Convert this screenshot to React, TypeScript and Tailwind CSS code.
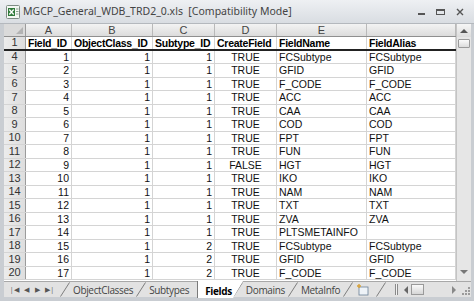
import { ReactNode } from 'react'

type Row = {
  n: number
  id: string
  oc: string
  st: string
  cf: string
  name: string
  alias: string
}

const names = [
  'FCSubtype', 'GFID', 'F_CODE', 'ACC', 'CAA', 'COD', 'FPT', 'FUN', 'HGT',
  'IKO', 'NAM', 'TXT', 'ZVA', 'PLTSMETAINFO', 'FCSubtype', 'GFID', 'F_CODE',
]

const rows: Row[] = names.map((name, i) => ({
  n: i + 4,
  id: String(i + 1),
  oc: '1',
  st: i >= 14 ? '2' : '1',
  cf: name === 'HGT' ? 'FALSE' : 'TRUE',
  name,
  alias: name === 'PLTSMETAINFO' ? '' : name,
}))

// column widths in px: A..F
const cols = ['w-[46px]', 'w-[81px]', 'w-[62px]', 'w-[62px]', 'w-[90px]', 'w-[89px]']

function Cell({
  w,
  align = 'left',
  bold,
  children,
}: {
  w: string
  align?: 'left' | 'right' | 'center'
  bold?: boolean
  children?: ReactNode
}) {
  const a = align === 'right' ? 'justify-end pr-[2px]' : align === 'center' ? 'justify-center' : 'justify-start pl-[2px]'
  return (
    <div
      className={`${w} shrink-0 h-full flex items-center overflow-hidden whitespace-nowrap border-r border-[#d4d4d4] ${a} ${bold ? 'font-bold text-black tracking-[-0.25px]' : 'text-[#111]'}`}
    >
      {children}
    </div>
  )
}

function RowHead({ children }: { children: ReactNode }) {
  return (
    <div className="w-[22px] shrink-0 h-full flex items-center justify-center bg-gradient-to-r from-[#ececec] to-[#dedede] border-r border-[#9b9b9b] text-[#333] text-[11px]">
      {children}
    </div>
  )
}

function ColHead({ w, label }: { w: string; label: string }) {
  return (
    <div
      className={`${w} shrink-0 h-full flex items-center justify-center border-r border-[#b9b9b9] text-[#444] text-[11px]`}
    >
      {label}
    </div>
  )
}

function Slant() {
  return (
    <svg className="absolute left-0 top-0 h-full w-[10px]" viewBox="0 0 10 16" preserveAspectRatio="none">
      <line x1="0.5" y1="15.5" x2="9.5" y2="0.5" stroke="#7a7a7a" strokeWidth="1" />
    </svg>
  )
}

function Tab({ label, active }: { label: string; active?: boolean }) {
  if (active) {
    return (
      <div className="relative flex items-end h-[17px] -mt-px ml-[5px] pl-[7px] pr-[1px] bg-white font-bold text-black border-l border-[#7a7a7a] z-10">
        <span className="pb-[2px]">{label}</span>
        <svg className="absolute right-[-10px] top-0 h-full w-[10px]" viewBox="0 0 10 17" preserveAspectRatio="none">
          <path d="M0 0 L10 0 L0 17 Z" fill="#ffffff" />
        </svg>
      </div>
    )
  }
  return (
    <div className="relative flex items-end h-full pl-[13px] pr-[3px] text-[#444]">
      <Slant />
      <span className="pb-[2px]">{label}</span>
    </div>
  )
}

export default function App() {
  return (
    <div className="w-[474px] h-[301px] overflow-hidden bg-[#c9cdd2] flex flex-col text-[10.5px] leading-none font-['Liberation_Sans',Arial,sans-serif]">
      {/* title bar */}
      <div className="h-[24px] shrink-0 flex items-center bg-gradient-to-b from-[#eef0f3] to-[#d9dde2] border-b border-[#b4b8bd]">
        <svg className="ml-[6px] w-[14px] h-[14px]" viewBox="0 0 14 14">
          <rect x="0.5" y="0.5" width="13" height="13" rx="1" fill="#f4f7f3" stroke="#7f8c85" />
          <rect x="2" y="3" width="7" height="8" fill="#2f7a3a" />
          <path d="M3.3 4.5 L7.7 9.5 M7.7 4.5 L3.3 9.5" stroke="#fff" strokeWidth="1.3" />
          <path d="M10 4h2.5M10 6.5h2.5M10 9h2.5" stroke="#6b8a6f" strokeWidth="0.8" />
        </svg>
        <span className="ml-[3px] text-[10.5px] text-[#444] font-['Noto_Sans',sans-serif]">
          MGCP_General_WDB_TRD2_0.xls&nbsp;&nbsp;[Compatibility Mode]
        </span>
        <div className="ml-auto flex items-center gap-[11px] pr-[10px] text-[#4a4a4a]">
          <div className="w-[7px] h-[2px] bg-[#555] mt-[5px]" />
          <div className="w-[9px] h-[6px] border border-[#555] border-t-2" />
          <svg className="w-[8px] h-[8px]" viewBox="0 0 8 8">
            <path d="M1 1 L7 7 M7 1 L1 7" stroke="#555" strokeWidth="1.4" />
          </svg>
        </div>
      </div>

      {/* sheet + vertical scrollbar */}
      <div className="flex-1 min-h-0 flex pl-[4px] pr-[3px]">
        <div className="flex flex-col bg-white">
          {/* column header */}
          <div className="h-[13px] shrink-0 flex bg-gradient-to-b from-[#f3f3f3] to-[#dcdcdc] border-b border-[#8f8f8f]">
            <div className="relative w-[22px] shrink-0 h-full border-r border-[#9b9b9b] bg-[#dadada]">
              <div className="absolute right-[2px] bottom-[2px] w-0 h-0 border-l-[7px] border-l-transparent border-b-[7px] border-b-[#b3b3b3]" />
            </div>
            {['A', 'B', 'C', 'D', 'E', ''].map((l, i) => (
              <ColHead key={i} w={cols[i]} label={l} />
            ))}
          </div>
          {/* row 1 (frozen header) */}
          <div className="h-[13.56px] shrink-0 flex border-b-2 border-[#222]">
            <RowHead>1</RowHead>
            <Cell w={cols[0]} bold>Field_ID</Cell>
            <Cell w={cols[1]} bold>ObjectClass_ID</Cell>
            <Cell w={cols[2]} bold>Subtype_ID</Cell>
            <Cell w={cols[3]} bold>CreateField</Cell>
            <Cell w={cols[4]} bold>FieldName</Cell>
            <Cell w={cols[5]} bold>FieldAlias</Cell>
          </div>
          {rows.map((r) => (
            <div key={r.n} className="h-[13.5px] shrink-0 flex border-b border-[#d4d4d4]">
              <RowHead>{r.n}</RowHead>
              <Cell w={cols[0]} align="right">{r.id}</Cell>
              <Cell w={cols[1]} align="right">{r.oc}</Cell>
              <Cell w={cols[2]} align="right">{r.st}</Cell>
              <Cell w={cols[3]} align="center">{r.cf}</Cell>
              <Cell w={cols[4]}>{r.name}</Cell>
              <Cell w={cols[5]}>{r.alias}</Cell>
            </div>
          ))}
        </div>

        {/* vertical scrollbar */}
        <div className="w-[15px] shrink-0 flex flex-col bg-[#e6e6e6] border-l border-[#c4c4c4]">
          <div className="h-[13px] flex items-center justify-center bg-gradient-to-b from-[#f6f6f6] to-[#dcdcdc]">
            <div className="w-0 h-0 border-x-[4px] border-x-transparent border-b-[4px] border-b-[#555]" />
          </div>
          <div className="mt-[2px] mx-[1px] h-[9px] bg-gradient-to-b from-[#fafafa] to-[#dcdcdc] border border-[#9a9a9a] rounded-[1px]" />
          <div className="flex-1" />
          <div className="h-[13px] flex items-center justify-center">
            <div className="w-0 h-0 border-x-[4px] border-x-transparent border-t-[4px] border-t-[#777]" />
          </div>
          <div className="h-[3px]" />
        </div>
      </div>

      {/* sheet tabs */}
      <div className="h-[16px] shrink-0 mx-[4px] mr-[3px] flex items-stretch bg-[#e2e2e2] border-t border-[#a8a8a8] text-[10px] font-['Open_Sans',sans-serif] tracking-[-0.35px]">
        <div className="w-[56px] shrink-0 flex items-center justify-around px-[3px] text-[7px] text-[#555] tracking-normal">
          <span>|◀</span>
          <span>◀</span>
          <span>▶</span>
          <span>▶|</span>
        </div>
        <div className="flex items-stretch">
          <Tab label="ObjectClasses" />
          <Tab label="Subtypes" />
          <Tab label="Fields" active />
          <Tab label="Domains" />
          <Tab label="MetaInfo" />
          <div className="relative flex items-center pl-[13px] pr-[6px]">
            <Slant />
            <svg className="w-[14px] h-[12px]" viewBox="0 0 14 12">
              <rect x="3" y="3" width="9" height="8" fill="#eef3f8" stroke="#6a7f96" strokeWidth="0.8" />
              <path d="M1 2h4M3 0v4" stroke="#d8a23a" strokeWidth="1.4" />
            </svg>
          </div>
          <div className="relative w-[10px]">
            <Slant />
          </div>
        </div>
        <div className="ml-auto w-[76px] flex items-center">
          <div className="w-[3px] h-[11px] border-x border-[#8a8a8a] bg-[#f2f2f2]" />
          <div className="w-[10px] flex justify-center ml-[3px]">
            <div className="w-0 h-0 border-y-[4px] border-y-transparent border-r-[4px] border-r-[#666]" />
          </div>
          <div className="w-[13px] h-[11px] bg-gradient-to-b from-[#fafafa] to-[#d6d6d6] border border-[#9a9a9a]" />
          <div className="flex-1" />
          <div className="w-[10px] flex justify-center">
            <div className="w-0 h-0 border-y-[4px] border-y-transparent border-l-[4px] border-l-[#888]" />
          </div>
          <svg className="w-[12px] h-[12px]" viewBox="0 0 12 12">
            <g fill="#9a9a9a">
              <rect x="9" y="3" width="2" height="2" />
              <rect x="6" y="6" width="2" height="2" />
              <rect x="9" y="6" width="2" height="2" />
              <rect x="3" y="9" width="2" height="2" />
              <rect x="6" y="9" width="2" height="2" />
              <rect x="9" y="9" width="2" height="2" />
            </g>
          </svg>
        </div>
      </div>
      <div className="h-[4px] shrink-0" />
    </div>
  )
}
